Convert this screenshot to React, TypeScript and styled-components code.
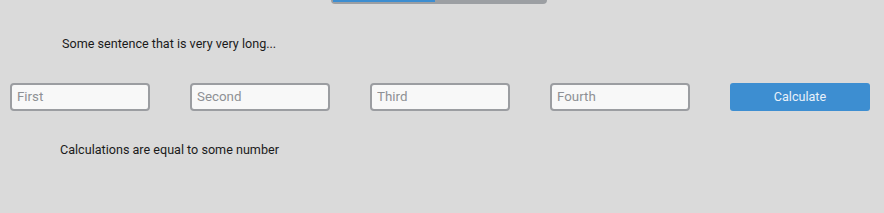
import React from "react";
import styled, { createGlobalStyle } from "styled-components";

const GlobalStyle = createGlobalStyle`
    html, body {
        margin: 0;
        padding: 0;
        background: #dadada;
        font-family: Roboto, "Noto Sans", sans-serif;
    }
`;

const Page = styled.div`
    width: 884px;
    height: 213px;
    display: flex;
    flex-direction: column;
    background: #dadada;
`;

const TabTrack = styled.div`
    align-self: flex-start;
    margin-left: 331px;
    width: 216px;
    height: 4px;
    background: #9c9fa3;
    border-radius: 0 0 4px 4px;
    display: flex;
    padding: 0 2px;
    box-sizing: border-box;
`;

const TabIndicator = styled.div`
    width: 102px;
    height: 2px;
    background: #3d8ed1;
`;

const Sentence = styled.p<{ indent: number }>`
    margin: 0;
    padding-left: ${({ indent }) => indent}px;
    font-size: 12.6px;
    color: #1a1a1a;
    line-height: 16px;
`;

const InputRow = styled.div`
    display: flex;
    gap: 40px;
    padding: 0 10px;
    margin: 31px 0 31px;
`;

const Field = styled.input`
    width: 140px;
    height: 28px;
    box-sizing: border-box;
    border: 2px solid #9b9da1;
    border-radius: 4px;
    background: #f8f8f8;
    padding: 0 5px 2px;
    font-family: Roboto, sans-serif;
    font-size: 13.333px;
    color: #222;
    outline: none;

    &::placeholder {
        color: #8e9094;
    }
`;

const CalcButton = styled.button`
    width: 140px;
    height: 28px;
    border: none;
    border-radius: 3px;
    background: #3d8ed1;
    color: #e8f1fa;
    font-family: Roboto, sans-serif;
    font-size: 12.6px;
    padding: 0 0 2px;
    cursor: pointer;
`;

export default function App() {
    return (
        <Page>
            <GlobalStyle />
            <TabTrack>
                <TabIndicator />
            </TabTrack>
            <Sentence indent={62} style={{ marginTop: 32 }}>
                Some sentence that is very very long...
            </Sentence>
            <InputRow>
                <Field placeholder="First" />
                <Field placeholder="Second" />
                <Field placeholder="Third" />
                <Field placeholder="Fourth" />
                <CalcButton>Calculate</CalcButton>
            </InputRow>
            <Sentence indent={60}>Calculations are equal to some number</Sentence>
        </Page>
    );
}
